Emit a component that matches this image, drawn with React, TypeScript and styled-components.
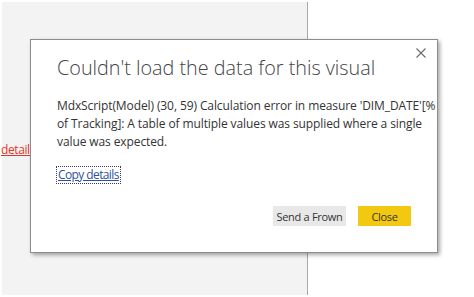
import React from "react";
import styled, { createGlobalStyle } from "styled-components";

const Global = createGlobalStyle`
  html, body { margin: 0; padding: 0; background: #ffffff; }
  body { width: 474px; height: 297px; overflow: hidden; font-family: "Open Sans", "Noto Sans", sans-serif; }
`;

const Page = styled.div`
  position: relative;
  display: flex;
  width: 474px;
  height: 297px;
  background: #ffffff;
`;

const SidePanel = styled.div`
  width: 306px;
  height: 293px;
  margin: 2px 0 0 2px;
  background: #f3f3f3;
  border-right: 1px solid #a9a9a9;
  display: flex;
  flex-direction: column;
  padding-top: 139px;
  box-sizing: border-box;
`;

const RedLink = styled.a`
  font-size: 12px;
  line-height: 18px;
  letter-spacing: -0.4px;
  color: #e5352b;
  text-decoration: underline;
  margin-left: -1px;
`;

const Dialog = styled.div`
  position: absolute;
  left: 30px;
  top: 39px;
  width: 408px;
  height: 214px;
  box-sizing: border-box;
  background: #ffffff;
  border: 1px solid #8c8c8c;
  box-shadow: 2px 2px 4px rgba(0, 0, 0, 0.35);
  display: flex;
  flex-direction: column;
  padding: 14px 26px 0 26px;
`;

const CloseX = styled.button`
  position: absolute;
  top: 6px;
  right: 9px;
  width: 14px;
  height: 14px;
  padding: 0;
  border: none;
  background: transparent;
  display: flex;
  align-items: center;
  justify-content: center;
`;

const Title = styled.h1`
  margin: 0;
  font-family: "Open Sans", "Noto Sans", sans-serif;
  font-weight: 300;
  font-size: 19.8px;
  line-height: 28px;
  color: #444444;
  white-space: nowrap;
`;

const Message = styled.p`
  margin: 15px 0 0 0;
  font-size: 12px;
  line-height: 18px;
  letter-spacing: -0.1px;
  color: #333333;
  white-space: nowrap;
`;

const CopyLink = styled.a`
  align-self: flex-start;
  margin-top: 16px;
  font-size: 12px;
  line-height: 16px;
  letter-spacing: -0.6px;
  color: #2f52a0;
  text-decoration: underline;
  outline: 1px dotted #3a3a5a;
  padding: 0 1px;
`;

const Actions = styled.div`
  display: flex;
  justify-content: flex-end;
  gap: 12px;
  margin-top: 23px;
`;

const Button = styled.button<{ $primary?: boolean }>`
  width: ${(p) => (p.$primary ? "53px" : "73px")};
  height: 20px;
  padding: 0;
  border: none;
  font-family: "Open Sans", "Noto Sans", sans-serif;
  font-size: 11px;
  letter-spacing: -0.3px;
  color: #333333;
  background: ${(p) => (p.$primary ? "#f2c811" : "#e8e8e8")};
`;

export default function App() {
  return (
    <Page>
      <Global />
      <SidePanel>
        <RedLink>details</RedLink>
      </SidePanel>
      <Dialog>
        <CloseX aria-label="Close">
          <svg width="10" height="10" viewBox="0 0 10 10">
            <path d="M0.5 0.5 L9.5 9.5 M9.5 0.5 L0.5 9.5" stroke="#6a6a6a" strokeWidth="1.1" />
          </svg>
        </CloseX>
        <Title>Couldn't load the data for this visual</Title>
        <Message>
          MdxScript(Model) (30, 59) Calculation error in measure 'DIM_DATE'[%
          <br />
          of Tracking]: A table of multiple values was supplied where a single
          <br />
          value was expected.
        </Message>
        <CopyLink>Copy details</CopyLink>
        <Actions>
          <Button>Send a Frown</Button>
          <Button $primary>Close</Button>
        </Actions>
      </Dialog>
    </Page>
  );
}
